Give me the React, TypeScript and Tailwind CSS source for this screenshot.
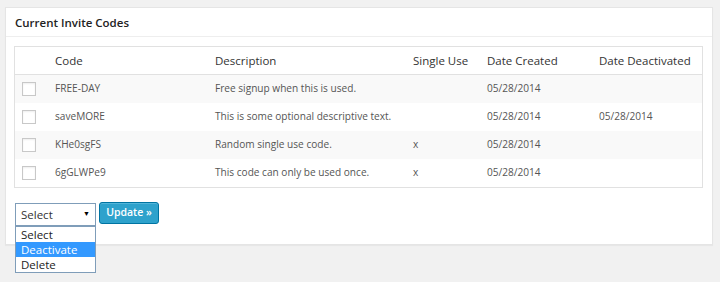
import React from 'react';

type Code = {
  code: string;
  description: string;
  singleUse: boolean;
  created: string;
  deactivated: string;
};

const codes: Code[] = [
  { code: 'FREE-DAY', description: 'Free signup when this is used.', singleUse: false, created: '05/28/2014', deactivated: '' },
  { code: 'saveMORE', description: 'This is some optional descriptive text.', singleUse: false, created: '05/28/2014', deactivated: '05/28/2014' },
  { code: 'KHe0sgFS', description: 'Random single use code.', singleUse: true, created: '05/28/2014', deactivated: '' },
  { code: '6gGLWPe9', description: 'This code can only be used once.', singleUse: true, created: '05/28/2014', deactivated: '' },
];

const cols = 'grid grid-cols-[32px_160px_198px_74px_112px_1fr]';

function Checkbox() {
  return <span className="block w-[14px] h-[14px] border border-[#c8c8c8] bg-white shadow-[inset_0_1px_2px_rgba(0,0,0,0.07)]" />;
}

export default function App() {
  return (
    <div
      className="h-[282px] bg-[#f1f1f1] pt-[7px] pl-[5px]"
      style={{ fontFamily: '"Open Sans", "Liberation Sans", sans-serif' }}
    >
      <div className="w-[708px] h-[238px] bg-white border border-[#e5e5e5] shadow-[0_1px_1px_rgba(0,0,0,0.04)]">
        <div className="h-[29px] pl-[9px] pt-[2px] flex items-center border-b border-[#eeeeee]">
          <h2 className="text-[11.5px] font-semibold text-[#222]">Current Invite Codes</h2>
        </div>

        <div className="px-[8px] pt-[9px]">
          <div className="w-[689px] border border-[#e1e1e1]">
            <div className={`${cols} h-[28px] items-center border-b border-[#e1e1e1] text-[11.5px] text-[#333]`}>
              <div />
              <div className="pl-[8px]">Code</div>
              <div className="pl-[8px]">Description</div>
              <div className="pl-[8px]">Single Use</div>
              <div className="pl-[8px]">Date Created</div>
              <div className="pl-[8px]">Date Deactivated</div>
            </div>
            {codes.map((c, i) => (
              <div
                key={c.code}
                className={`${cols} h-[28px] items-center text-[10.1px] text-[#555] ${i % 2 === 0 ? 'bg-[#f9f9f9]' : 'bg-white'}`}
              >
                <div className="pl-[7px]">
                  <Checkbox />
                </div>
                <div className="pl-[8px]">{c.code}</div>
                <div className="pl-[8px]">{c.description}</div>
                <div className="pl-[8px]">{c.singleUse ? 'x' : ''}</div>
                <div className="pl-[8px]">{c.created}</div>
                <div className="pl-[8px]">{c.deactivated}</div>
              </div>
            ))}
          </div>

          <div className="mt-[14px] ml-[1px] flex items-start gap-[3px]">
            <div className="relative">
              <div className="mt-[1px] w-[81px] h-[23px] border border-[#7f9db9] bg-white flex items-center justify-between pl-[5px] pr-[5px] text-[11.5px] text-[#333]">
                <span>Select</span>
                <span className="text-[7px] text-black">▼</span>
              </div>
              <div className="absolute left-0 top-[24px] w-[81px] border border-[#7f9db9] bg-white text-[11.5px] leading-[15px] text-[#222]">
                <div className="pl-[5px] h-[15px]">Select</div>
                <div className="pl-[5px] h-[15px] bg-[#3399ff] text-white">Deactivate</div>
                <div className="pl-[5px] h-[15px]">Delete</div>
              </div>
            </div>
            <button className="w-[60px] h-[22px] rounded-[3px] bg-[#2ea2cc] border border-[#0074a2] text-white text-[10.5px] font-semibold shadow-[inset_0_1px_0_rgba(120,200,230,0.5)]">
              Update »
            </button>
          </div>
        </div>
      </div>
    </div>
  );
}
